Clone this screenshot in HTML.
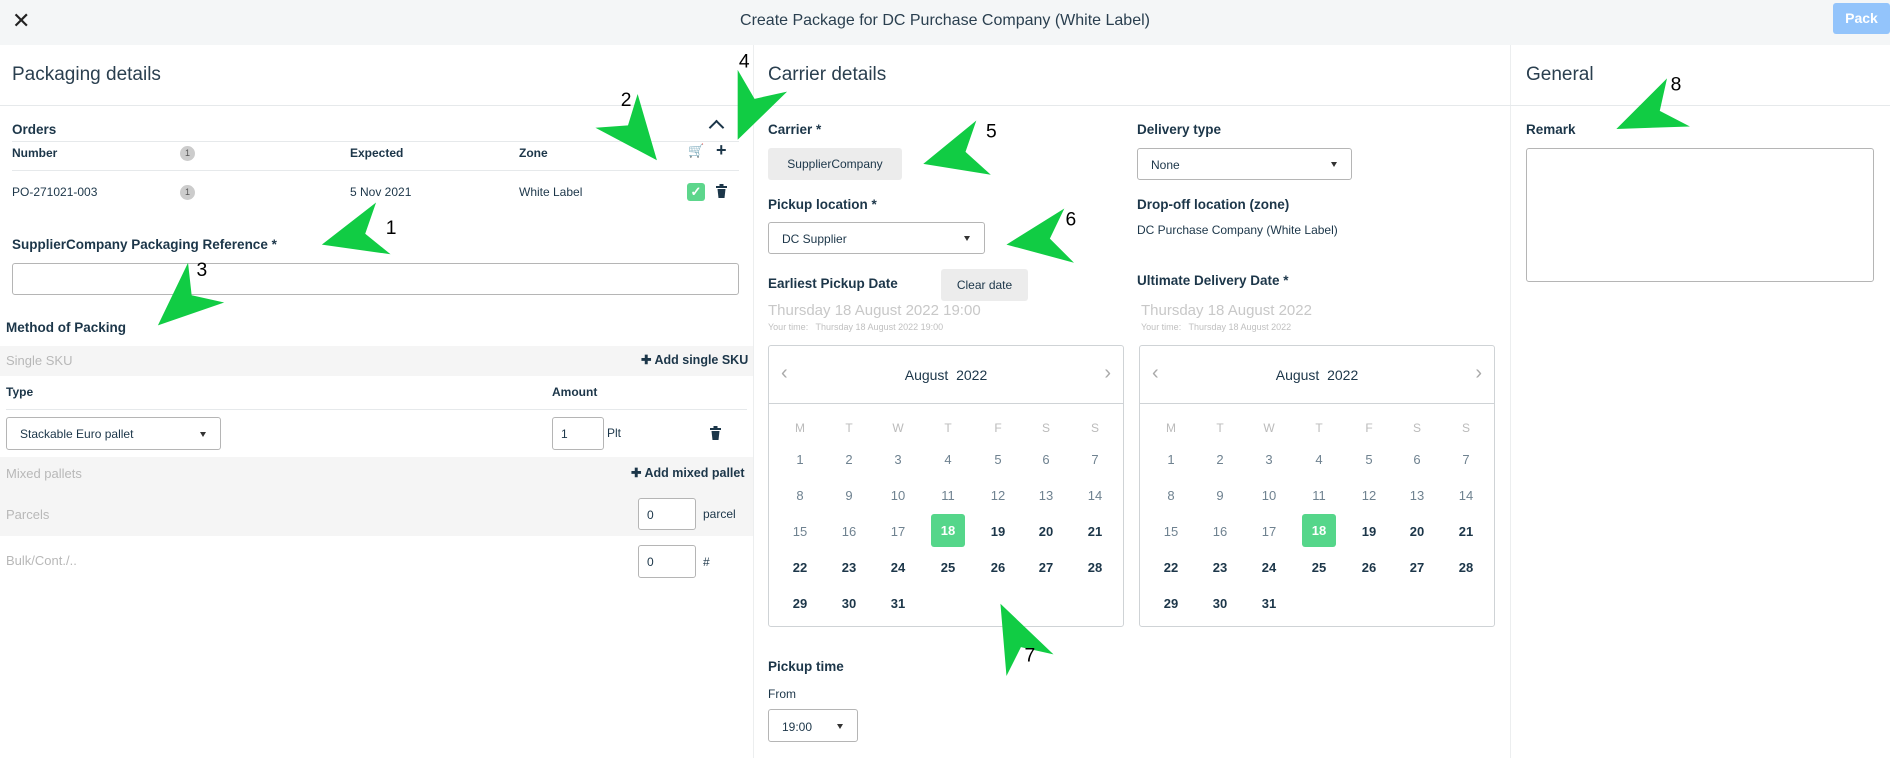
<!DOCTYPE html>
<html><head><meta charset="utf-8"><style>
*{box-sizing:border-box;margin:0;padding:0}
body{width:1890px;height:758px;overflow:hidden;background:#fff;font-family:"Liberation Sans",sans-serif;color:#1c3649;position:relative;font-size:13px}
.a{position:absolute;white-space:nowrap}
.b{font-weight:bold;font-size:13.5px;color:#1c3649}
.h{font-size:19px;color:#2a3f4f}
.box{position:absolute;border:1px solid #b5b5b5;border-radius:3px;background:#fff}
.sel::after{content:"";position:absolute;right:14px;top:50%;margin-top:-2px;border-left:3px solid transparent;border-right:3px solid transparent;border-top:5px solid #333}
.gray{color:#b8b8b8}
.line{position:absolute;height:1px;background:#e6e9eb}
.cal{position:absolute;border:1px solid #cfd3d6;border-radius:3px;width:356px;height:282px}
.cal .d{position:absolute;width:34px;text-align:center;font-size:13px}
</style></head><body>
<div class="a" style="left:0;top:0;width:1890px;height:45px;background:#f4f6f7"></div>
<div class="a" style="left:12px;top:8px;font-size:22px;color:#222">✕</div>
<div class="a" style="left:0;width:1890px;top:12px;text-align:center;font-size:16px;color:#2a3f4f">Create Package for DC Purchase Company (White Label)</div>
<div class="a" style="left:1833px;top:3px;width:57px;height:31px;background:#93c4fb;border-radius:3px;color:#fff;font-weight:bold;font-size:14px;text-align:center;line-height:31px">Pack</div>

<div class="a" style="left:753px;top:45px;width:1px;height:713px;background:#eceeef"></div>
<div class="a" style="left:1510px;top:45px;width:1px;height:713px;background:#eceeef"></div>
<div class="line" style="left:0;top:105px;width:1890px"></div>

<div class="a h" style="left:12px;top:64px">Packaging details</div>
<div class="a h" style="left:768px;top:64px">Carrier details</div>
<div class="a h" style="left:1526px;top:64px">General</div>

<div class="a b" style="left:12px;top:122px">Orders</div>
<div class="a" style="left:711px;width:11px;height:11px;border-left:2px solid #1c3649;border-top:2px solid #1c3649;transform:rotate(45deg);top:122px"></div>
<div class="line" style="left:12px;top:141px;width:727px"></div>
<div class="a b" style="left:12px;top:146px;font-size:12px">Number</div>
<div class="a" style="left:180px;top:146px;width:15px;height:15px;border-radius:50%;background:#ccc;font-size:9px;text-align:center;line-height:15px;color:#555">1</div>
<div class="a b" style="left:350px;top:146px;font-size:12px">Expected</div>
<div class="a b" style="left:519px;top:146px;font-size:12px">Zone</div>
<div class="a" style="left:688px;top:143px;font-size:13px;color:#1c3649">🛒</div>
<div class="a" style="left:716px;top:140px;font-size:18px;font-weight:bold">+</div>
<div class="line" style="left:12px;top:170px;width:727px"></div>
<div class="a" style="left:12px;top:185px;font-size:12px">PO-271021-003</div>
<div class="a" style="left:180px;top:185px;width:15px;height:15px;border-radius:50%;background:#ccc;font-size:9px;text-align:center;line-height:15px;color:#555">1</div>
<div class="a" style="left:350px;top:185px;font-size:12px">5 Nov 2021</div>
<div class="a" style="left:519px;top:185px;font-size:12px">White Label</div>
<div class="a" style="left:687px;top:183px;width:18px;height:18px;background:#5dd68c;border-radius:3px;color:#fff;font-size:13px;text-align:center;line-height:18px;font-weight:bold">✓</div>
<svg class="a" style="left:716px;top:184px" width="11" height="14" viewBox="0 0 11 14"><rect x="0" y="2" width="11" height="2" fill="#1c3649"/><rect x="3.5" y="0" width="4" height="2" fill="#1c3649"/><path d="M1.5 5h8l-1 9h-6z" fill="#1c3649"/></svg>

<div class="a b" style="left:12px;top:237px">SupplierCompany Packaging Reference *</div>
<div class="box" style="left:12px;top:263px;width:727px;height:32px"></div>
<div class="a b" style="left:6px;top:320px">Method of Packing</div>
<div class="a" style="left:0;top:346px;width:753px;height:30px;background:#f5f5f5"></div>
<div class="a gray" style="left:6px;top:353px">Single SKU</div>
<div class="a b" style="left:641px;top:352px;font-size:12.5px">✚ Add single SKU</div>
<div class="a b" style="left:6px;top:385px;font-size:12px">Type</div>
<div class="a b" style="left:552px;top:385px;font-size:12px">Amount</div>
<div class="line" style="left:6px;top:409px;width:741px"></div>
<div class="box sel" style="left:6px;top:417px;width:215px;height:33px"><span class="a" style="left:13px;top:9px;font-size:12px">Stackable Euro pallet</span></div>
<div class="box" style="left:552px;top:417px;width:52px;height:33px"><span class="a" style="left:8px;top:9px;font-size:12px">1</span></div>
<div class="a" style="left:607px;top:426px;font-size:12px">Plt</div>
<svg class="a" style="left:710px;top:426px" width="11" height="14" viewBox="0 0 11 14"><rect x="0" y="2" width="11" height="2" fill="#1c3649"/><rect x="3.5" y="0" width="4" height="2" fill="#1c3649"/><path d="M1.5 5h8l-1 9h-6z" fill="#1c3649"/></svg>
<div class="a" style="left:0;top:457px;width:753px;height:79px;background:#f5f5f5"></div>
<div class="a gray" style="left:6px;top:466px">Mixed pallets</div>
<div class="a b" style="left:631px;top:465px;font-size:12.5px">✚ Add mixed pallet</div>
<div class="a gray" style="left:6px;top:507px">Parcels</div>
<div class="box" style="left:638px;top:498px;width:58px;height:32px"><span class="a" style="left:8px;top:9px;font-size:12px">0</span></div>
<div class="a" style="left:703px;top:507px;font-size:12px">parcel</div>
<div class="a gray" style="left:6px;top:553px">Bulk/Cont./..</div>
<div class="box" style="left:638px;top:545px;width:58px;height:33px"><span class="a" style="left:8px;top:9px;font-size:12px">0</span></div>
<div class="a" style="left:703px;top:555px;font-size:12px">#</div>

<div class="a b" style="left:768px;top:122px">Carrier *</div>
<div class="a" style="left:768px;top:148px;width:134px;height:32px;background:#ececec;border-radius:3px;font-size:12px;text-align:center;line-height:32px">SupplierCompany</div>
<div class="a b" style="left:1137px;top:122px">Delivery type</div>
<div class="box sel" style="left:1137px;top:148px;width:215px;height:32px"><span class="a" style="left:13px;top:9px;font-size:12px">None</span></div>
<div class="a b" style="left:768px;top:197px">Pickup location *</div>
<div class="box sel" style="left:768px;top:222px;width:217px;height:32px"><span class="a" style="left:13px;top:9px;font-size:12px">DC Supplier</span></div>
<div class="a b" style="left:1137px;top:197px">Drop-off location (zone)</div>
<div class="a" style="left:1137px;top:223px;font-size:12px">DC Purchase Company (White Label)</div>
<div class="a b" style="left:768px;top:276px">Earliest Pickup Date</div>
<div class="a" style="left:941px;top:269px;width:87px;height:32px;background:#ececec;border-radius:3px;font-size:12px;text-align:center;line-height:32px">Clear date</div>
<div class="a b" style="left:1137px;top:273px">Ultimate Delivery Date *</div>
<div class="a" style="left:768px;top:302px;font-size:15px;color:#c8c8c8">Thursday 18 August 2022 19:00</div>
<div class="a" style="left:768px;top:322px;font-size:9px;color:#c0c0c0">Your time: &nbsp; Thursday 18 August 2022 19:00</div>
<div class="a" style="left:1141px;top:302px;font-size:15px;color:#c8c8c8">Thursday 18 August 2022</div>
<div class="a" style="left:1141px;top:322px;font-size:9px;color:#c0c0c0">Your time: &nbsp; Thursday 18 August 2022</div>

<div class="a b" style="left:768px;top:659px">Pickup time</div>
<div class="a" style="left:768px;top:687px;font-size:12px">From</div>
<div class="box sel" style="left:768px;top:709px;width:90px;height:33px"><span class="a" style="left:13px;top:10px;font-size:12px">19:00</span></div>

<div class="a b" style="left:1526px;top:122px">Remark</div>
<div class="box" style="left:1526px;top:148px;width:348px;height:134px"></div>

<div id="cals"></div>
<script>
function cal(x){
 let h='<div class="cal" style="left:'+x+'px;top:345px">';
 h+='<div class="a" style="left:12px;top:16px;font-size:20px;color:#aaa">‹</div><div class="a" style="right:12px;top:16px;font-size:20px;color:#aaa">›</div>';
 h+='<div class="a" style="left:0;width:354px;text-align:center;top:21px;font-size:14px">August &nbsp;2022</div>';
 h+='<div class="a" style="left:0;top:57px;width:354px;height:1px;background:#cfd3d6"></div>';
 const cx=[31,80,129,179,229,277,326];const ry=[106,142,178,214,250];
 'MTWTFSS'.split('').forEach((c,i)=>h+='<div class="d a" style="left:'+(cx[i]-17)+'px;top:75px;color:#bbb;font-size:12px">'+c+'</div>');
 for(let n=1;n<=31;n++){const i=(n-1)%7,r=Math.floor((n-1)/7);
  let st='left:'+(cx[i]-17)+'px;top:'+ry[r]+'px;';
  let col=n<18?'#6f8290':'#1c3649';let fw=n>18?'bold':'normal';
  if(n==18){h+='<div class="a" style="left:'+(cx[i]-17)+'px;top:'+(ry[r]-10)+'px;width:34px;height:33px;background:#55d68a;border-radius:3px;color:#fff;font-weight:bold;text-align:center;line-height:33px">18</div>';continue;}
  h+='<div class="d a" style="'+st+'color:'+col+';font-weight:'+fw+'">'+n+'</div>';}
 return h+'</div>';}
document.getElementById('cals').innerHTML=cal(768)+cal(1139);
</script>

<svg class="a" style="left:0;top:0" width="1890" height="758" viewBox="0 0 1568 629" preserveAspectRatio="none">
<g fill="#11cc44">
<polygon points="267,203 312,168 303,194 324,211"/>
<polygon points="545,133 529,78 521,104 494,106"/>
<polygon points="131,270 156,218 159,245 186,251"/>
<polygon points="612,116 612,58 626,82 653,76"/>
<polygon points="766,136 810,100 801,126 822,145"/>
<polygon points="835,203 883,173 871,198 891,218"/>
<polygon points="830,501 835,561 847,537 874,543"/>
<polygon points="1341,107 1383,65 1377,92 1402,105"/>
</g>
<g font-family="Liberation Sans" font-size="16" fill="#000">
<text x="320" y="194">1</text><text x="515" y="88">2</text><text x="163" y="229">3</text><text x="613" y="56">4</text>
<text x="818" y="114">5</text><text x="884" y="187">6</text><text x="850" y="549">7</text><text x="1386" y="75">8</text>
</g>
</svg>
</body></html>
